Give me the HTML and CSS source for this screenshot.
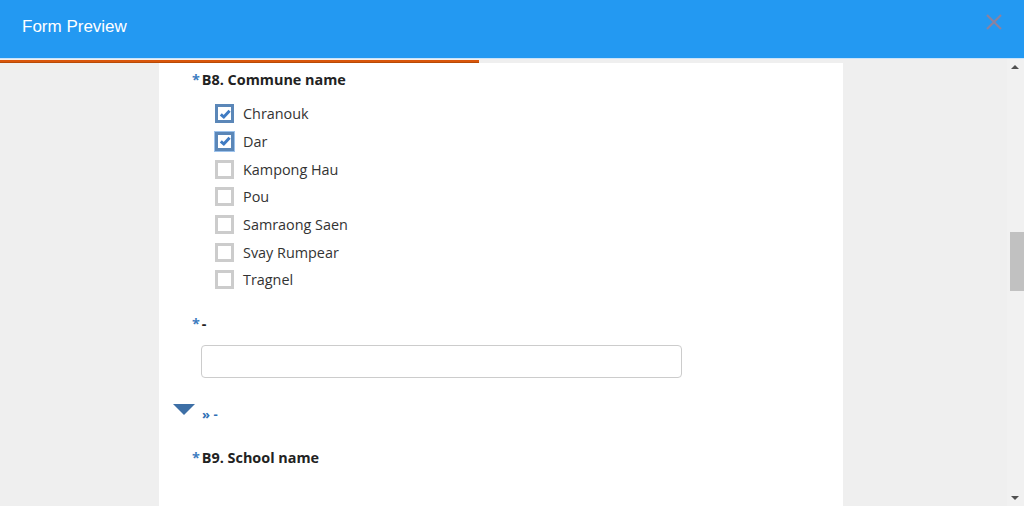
FILE: index.html
```
<!DOCTYPE html>
<html>
	<head>
		<meta charset="utf-8" />
		<title>Form Preview</title>
		<link rel="stylesheet" href="styles.css">
	</head>
	<body>
		<div class="header">
			<span class="title">Form Preview</span>
			<svg class="close" width="16" height="16" viewBox="0 0 16 16"><path d="M1 1L15 15M15 1L1 15" stroke="#8a82a0" stroke-width="2.2"/></svg>
		</div>
		<div class="page">
			<div class="main">
				<div class="progress"></div>
				<div class="panel">
					<div class="question">
						<div class="label"><span class="req">*</span>B8. Commune name</div>
						<ul class="options">
							<li><span class="box on"><svg viewBox="0 0 12 12"><path d="M1.8 6.3L4.8 9L10.6 2.8" fill="none" stroke="#3f7bc3" stroke-width="3"/></svg></span>Chranouk</li>
							<li><span class="box on focus"><svg viewBox="0 0 12 12"><path d="M1.8 6.3L4.8 9L10.6 2.8" fill="none" stroke="#3f7bc3" stroke-width="3"/></svg></span>Dar</li>
							<li><span class="box"></span>Kampong Hau</li>
							<li><span class="box"></span>Pou</li>
							<li><span class="box"></span>Samraong Saen</li>
							<li><span class="box"></span>Svay Rumpear</li>
							<li><span class="box"></span>Tragnel</li>
						</ul>
					</div>
					<div class="question q2">
						<div class="label"><span class="req">*</span>-</div>
						<input class="text" type="text">
					</div>
					<div class="group">
						<span class="caret"></span><span class="group-name">&raquo; -</span>
					</div>
					<div class="question q3">
						<div class="label"><span class="req">*</span>B9. School name</div>
					</div>
				</div>
			</div>
			<div class="scrollbar">
				<div class="arrow up"></div>
				<div class="track"><div class="thumb"></div></div>
				<div class="arrow down"></div>
			</div>
		</div>
	</body>
</html>
```
FILE: styles.css
```
*{
	margin: 0;
	padding: 0;
	box-sizing: border-box;
}
html,body{
	height: 100%;
	overflow: hidden;
}
body{
	font-family: "Open Sans", "Liberation Sans", sans-serif;
	background: #efefef;
	display: flex;
	flex-direction: column;
}
.header{
	height: 59px;
	background: #2399f2;
	border-bottom: 1px solid #c9e4fb;
	display: flex;
	align-items: center;
	justify-content: space-between;
	padding: 0 22px 0 22px;
	flex: none;
}
.title{
	font-family: "Liberation Sans", Arial, sans-serif;
	color: #fff;
	font-size: 17px;
	margin-top: -4px;
}
.close{
	margin-top: -14px;
	margin-right: 0;
}
.page{
	flex: 1;
	display: flex;
	min-height: 0;
}
.main{
	flex: 1;
	position: relative;
	padding-top: 4px;
}
.progress{
	position: absolute;
	left: 0;
	top: 1px;
	width: 479px;
	height: 3px;
	background: #d9560b;
	border-bottom: 1px solid #b84a06;
	z-index: 2;
}
.panel{
	margin-left: 159px;
	width: 684px;
	height: 100%;
	background: #fff;
	padding-top: 7px;
}
.question{
	padding-left: 33px;
}
.label{
	font-size: 14.4px;
	font-weight: bold;
	color: #222;
	line-height: 20px;
}
.req{
	color: #3f7cc0;
	margin-right: 2px;
}
li{
	list-style: none;
}
.options{
	margin-top: 10px;
	padding-left: 23px;
}
.options li{
	height: 27.67px;
	display: flex;
	align-items: center;
	font-size: 14.4px;
	color: #333;
}
.box{
	width: 19px;
	height: 19px;
	border: 3px solid #cccccc;
	margin-right: 9px;
	display: flex;
	align-items: center;
	justify-content: center;
}
.box svg{
	width: 12px;
	height: 12px;
}
.box.on{
	border-color: #5b87b8;
}
.box.focus{
	box-shadow: 0 0 0 1px #9cc2ec;
}
.q2{
	margin-top: 20px;
}
.text{
	display: block;
	margin: 11px 0 0 9px;
	width: 481px;
	height: 33px;
	border: 1px solid #cccccc;
	border-radius: 4px;
	outline: none;
}
.group{
	margin-top: 25px;
	padding-left: 14px;
	display: flex;
	align-items: center;
	height: 20px;
}
.caret{
	width: 0;
	height: 0;
	border-left: 11px solid transparent;
	border-right: 11px solid transparent;
	border-top: 11px solid #3d6fa6;
	margin-right: 7px;
	margin-top: -7px;
}
.group-name{
	color: #2f6fb5;
	font-size: 13px;
	font-weight: bold;
	margin-top: 2px;
}
.q3{
	margin-top: 25px;
}
.scrollbar{
	width: 17px;
	flex: none;
	background: #f1f1f1;
	display: flex;
	flex-direction: column;
}
.arrow{
	height: 17px;
	flex: none;
	position: relative;
}
.arrow::after{
	content: "";
	position: absolute;
	left: 4px;
	width: 0;
	height: 0;
	border-left: 4px solid transparent;
	border-right: 4px solid transparent;
}
.arrow.up::after{
	top: 6px;
	border-bottom: 4px solid #505050;
}
.arrow.down::after{
	top: 7px;
	border-top: 4px solid #505050;
}
.track{
	flex: 1;
	padding-top: 156px;
}
.thumb{
	margin-left: 3px;
	width: 14px;
	height: 59px;
	background: #c1c1c1;
}
```
